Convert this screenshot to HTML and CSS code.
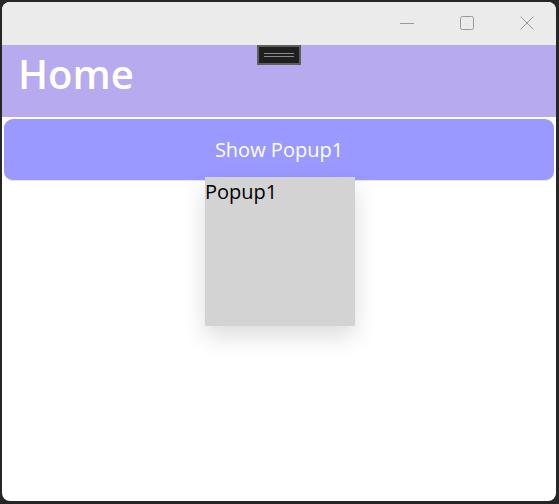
FILE: index.html
```html
<!DOCTYPE html>
<html>
<head>
<meta charset="utf-8">
<link rel="stylesheet" href="styles.css">
</head>
<body>
<div class="window">
  <div class="titlebar">
    <div class="caption-btn">
      <svg width="16" height="16" viewBox="0 0 16 16"><path d="M1 7.5H15" stroke="#9a9a9a" stroke-width="1" fill="none"/></svg>
    </div>
    <div class="caption-btn">
      <svg width="16" height="16" viewBox="0 0 16 16"><rect x="1.5" y="0.5" width="13" height="13" rx="2" stroke="#9a9a9a" stroke-width="1" fill="none"/></svg>
    </div>
    <div class="caption-btn">
      <svg width="16" height="16" viewBox="0 0 16 16"><path d="M1.5 0.5L14.5 13.5M14.5 0.5L1.5 13.5" stroke="#9a9a9a" stroke-width="1" fill="none"/></svg>
    </div>
  </div>
  <div class="header">
    <h1 class="title">Home</h1>
  </div>
  <div class="content">
    <button class="show-btn">Show Popup1</button>
  </div>
  <div class="handle"><span class="bar"></span><span class="bar"></span></div>
  <div class="popup">Popup1</div>
</div>
</body>
</html>
```
FILE: styles.css
```css
html, body {
  margin: 0;
  padding: 0;
}
body {
  background: #262626;
  width: 559px;
  height: 504px;
  overflow: hidden;
  font-family: "Open Sans", "Noto Sans", sans-serif;
}
.window {
  position: relative;
  margin: 2px 3px 0 2px;
  height: 499px;
  background: #ffffff;
  border-radius: 8px;
  overflow: hidden;
  display: flex;
  flex-direction: column;
}
.titlebar {
  height: 43px;
  background: #ebebeb;
  display: flex;
  justify-content: flex-end;
  align-items: flex-start;
  padding-right: 21px;
}
.caption-btn {
  width: 60px;
  height: 30px;
  display: flex;
  justify-content: flex-end;
  align-items: flex-start;
  padding-top: 14px;
}
.caption-btn svg {
  display: block;
}
.header {
  height: 72px;
  box-sizing: border-box;
  background: #b8aaee;
  display: flex;
  align-items: flex-start;
  padding: 9px 0 0 16px;
}
.title {
  margin: 0;
  font-size: 40px;
  font-weight: 600;
  color: #ffffff;
  line-height: 1;
}
.content {
  padding: 2px 2px 0 2px;
}
.show-btn {
  display: block;
  width: 100%;
  height: 62px;
  border: none;
  border-bottom: 1px solid #e6e6f6;
  border-radius: 9px;
  background: #9999ff;
  color: #ffffff;
  font-family: "Open Sans", "Noto Sans", sans-serif;
  font-size: 20px;
  padding: 0;
}
.handle {
  position: absolute;
  left: 255px;
  top: 43px;
  width: 40px;
  height: 16px;
  background: #1f1f1f;
  border: 2px solid #5e5e5e;
  display: flex;
  flex-direction: column;
  justify-content: center;
  align-items: center;
  gap: 2px;
}
.handle .bar {
  display: block;
  width: 30px;
  height: 1px;
  background: #8a8a8a;
}
.popup {
  position: absolute;
  left: 203px;
  top: 175px;
  width: 150px;
  height: 149px;
  background: #d3d3d3;
  box-shadow: 0 10px 22px rgba(0, 0, 0, 0.14);
  color: #000000;
  font-size: 20px;
  line-height: 30px;
}
```
